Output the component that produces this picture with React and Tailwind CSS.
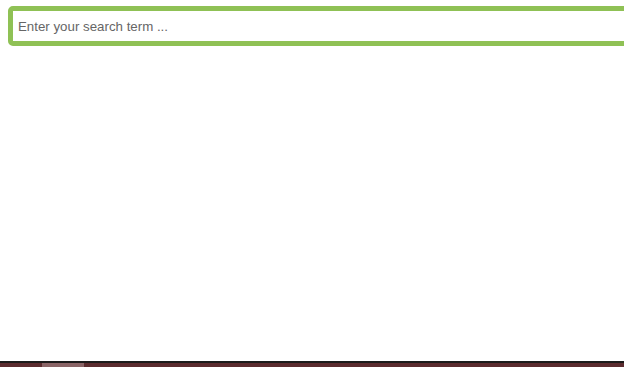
import React from 'react';

export default function App() {
  return (
    <div className="w-[624px] h-[367px] overflow-hidden bg-white flex flex-col" style={{ fontFamily: '"Liberation Sans", Arial, sans-serif' }}>
      <div className="flex-1 pt-[6px] pl-[8px]">
        <input
          type="text"
          placeholder="Enter your search term ..."
          className="w-[640px] h-[40px] border-[5px] border-[#8fc155] rounded-[5px] px-[5px] text-[13.3px] text-[#555] placeholder:text-[#666] outline-none"
        />
      </div>
      <footer className="h-[6px] border-t-2 border-[#1b1b1b] bg-[#5b2b2e] flex">
        <div className="ml-[42px] w-[42px] h-full bg-[#8a6466]" />
      </footer>
    </div>
  );
}
